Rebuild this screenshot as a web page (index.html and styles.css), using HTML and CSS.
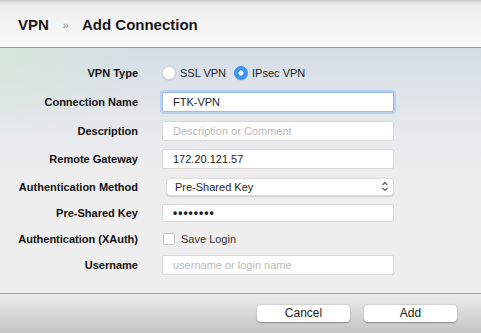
FILE: index.html
```html
<!DOCTYPE html>
<html>
<head>
<meta charset="utf-8">
<link rel="stylesheet" href="styles.css">
</head>
<body>
<div class="win">
  <header class="hdr">
    <span class="crumb">VPN</span>
    <span class="sep">»</span>
    <span class="crumb">Add Connection</span>
  </header>
  <main class="form">
    <div class="lbl">VPN Type</div>
    <div class="ctl radios">
      <label class="radio"><span class="dot"></span>SSL VPN</label>
      <label class="radio"><span class="dot on"></span>IPsec VPN</label>
    </div>

    <div class="lbl">Connection Name</div>
    <div class="ctl"><div class="inp focus">FTK-VPN</div></div>

    <div class="lbl">Description</div>
    <div class="ctl"><div class="inp ph">Description or Comment</div></div>

    <div class="lbl">Remote Gateway</div>
    <div class="ctl"><div class="inp">172.20.121.57</div></div>

    <div class="lbl">Authentication Method</div>
    <div class="ctl"><div class="sel"><span>Pre-Shared Key</span>
      <svg class="arr" width="8" height="11" viewBox="0 0 8 11"><path d="M1.5 4 L4 1.5 L6.5 4 M1.5 7 L4 9.5 L6.5 7" fill="none" stroke="#555" stroke-width="1.1"/></svg>
    </div></div>

    <div class="lbl">Pre-Shared Key</div>
    <div class="ctl"><div class="inp pw">••••••••</div></div>

    <div class="lbl">Authentication (XAuth)</div>
    <div class="ctl"><label class="check"><span class="box"></span>Save Login</label></div>

    <div class="lbl">Username</div>
    <div class="ctl"><div class="inp ph">username or login name</div></div>
  </main>
  <footer class="foot">
    <button class="btn">Cancel</button>
    <button class="btn">Add</button>
  </footer>
</div>
</body>
</html>
```
FILE: styles.css
```css
html, body { margin: 0; padding: 0; }
body {
  width: 481px; height: 333px; overflow: hidden;
  font-family: "Liberation Sans", Arial, sans-serif;
  color: #222;
}
.win { display: flex; flex-direction: column; height: 333px; }
.hdr {
  height: 48px; box-sizing: border-box;
  border-bottom: 1px solid #9a9a9a;
  background: linear-gradient(to bottom, #c9c9c9 0px, #e6e6e6 3px, #ededed 5px, #fbfbfb 47px);
  display: flex; align-items: center; gap: 0;
  padding: 2px 0 0 18px;
  font-size: 15px; font-weight: bold; color: #1a1a1a;
}
.sep { color: #a8a8a8; font-size: 11px; margin: 0 13px 0 14px; font-weight: bold; }
.form {
  flex: 1;
  display: grid;
  grid-template-columns: 138px 232px;
  column-gap: 24px;
  grid-template-rows: 28px 30px 28px 28px 27px 26px 26px 26px;
  align-items: center;
  align-content: start;
  padding-top: 11px;
  background:
    radial-gradient(ellipse 140px 90px at 0 0, rgba(214,232,214,0.9), rgba(214,232,214,0) 100%),
    linear-gradient(to bottom, #d4dde6 0px, #e2e6ea 60px, #ececed 110px, #eeeeee 150px);
}
.lbl { text-align: right; font-size: 11px; font-weight: bold; color: #111; }
.ctl { font-size: 11px; }
.radios { display: flex; gap: 8px; align-items: center; }
.radio { display: flex; align-items: center; gap: 4px; }
.dot {
  width: 14px; height: 14px; box-sizing: border-box; border-radius: 50%;
  background: #fff; border: 1px solid #d4d4d4; box-shadow: 0 0.5px 1px rgba(0,0,0,0.15);
}
.dot.on { background: radial-gradient(circle, #fff 0 2.3px, #3a95f7 2.8px); border-color: #3690f2; }
.inp {
  height: 20px; box-sizing: border-box; background: #fff;
  border: 1px solid #d9d9d9; border-radius: 2px;
  padding: 0 10px; line-height: 18px; font-size: 11px; color: #1e1e1e;
}
.inp.focus { border-color: #9cbde8; box-shadow: 0 0 0 2px #b7d1f3; border-radius: 2px; }
.inp.ph { color: #b9b9b9; }
.inp.pw { height: 18px; line-height: 16px; font-size: 12px; letter-spacing: 1px; font-weight: bold; }
.sel {
  margin-left: 4px; height: 18px; box-sizing: border-box;
  background: #fff; border-radius: 4px;
  border: 1px solid #dcdcdc; box-shadow: 0 0.5px 1px rgba(0,0,0,0.12);
  display: flex; align-items: center; justify-content: space-between;
  padding: 0 4px 0 8px; font-size: 11px; color: #1e1e1e;
}
.arr { display: block; }
.check { display: flex; align-items: center; gap: 6px; font-size: 11px; color: #333; }
.box {
  width: 12px; height: 12px; box-sizing: border-box; margin-left: 1px;
  background: #fff; border: 1px solid #c6c6c6; border-radius: 2px;
}
.foot {
  height: 40px; box-sizing: border-box;
  border-top: 1px solid #a3a3a3;
  background: linear-gradient(to bottom, #ececec, #c5c5c5);
  display: flex; justify-content: flex-end; align-items: flex-start;
  gap: 14px; padding: 11px 24px 0 0;
}
.btn {
  width: 93px; height: 17px; padding: 0; margin: 0;
  background: #fff; border: none; border-radius: 4px;
  box-shadow: 0 0.5px 1.5px rgba(0,0,0,0.35);
  font-family: "Liberation Sans", Arial, sans-serif; font-size: 12px; color: #222;
  line-height: 17px;
}
```
